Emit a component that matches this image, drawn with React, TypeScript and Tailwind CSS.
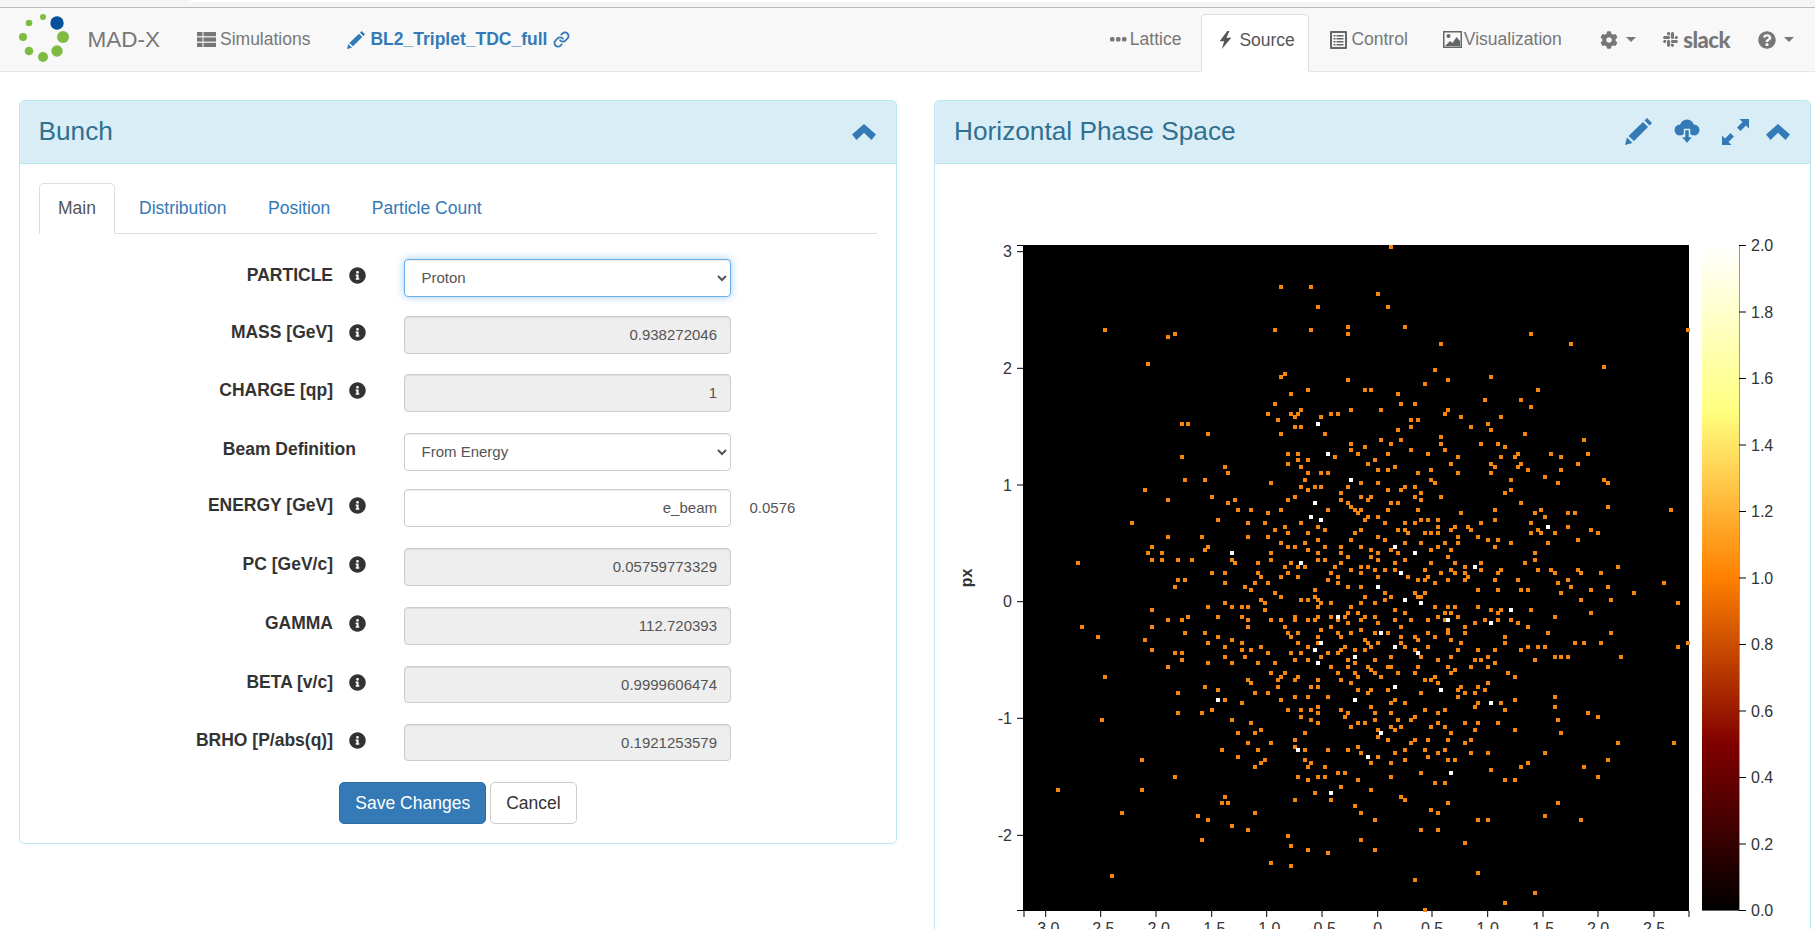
import { FaCog, FaInfoCircle, FaQuestionCircle, FaSlack } from 'react-icons/fa';
import { Link } from 'lucide-react';

type Pt = number[];

// heatmap cells read off the picture, one list per quadrant (crop coords, 3x)
const tl: Pt[] = [[461,296],[653,316],[673,305],[593,396],[994,174],[1084,174],[1104,234],[1284,185],[973,296],[1084,296],[1195,286],[1195,305],[1003,425],[994,436],[1195,446],[1074,476],[1024,485],[1244,476],[1264,476],[973,515],[953,545],[985,566],[1025,545],[1034,556],[1044,546],[1054,536],[1114,556],[1144,550],[1164,546],[1204,536],[693,576],[713,576],[773,606],[994,606],[1034,586],[1054,586],[1124,606],[1204,635],[1244,646],[1204,660],[1225,665],[693,676],[1015,665],[1044,665],[1015,695],[1040,686],[1074,686],[1154,676],[1054,706],[1250,695],[1274,686],[823,706],[833,725],[1074,725],[1114,725],[1134,725],[1284,716],[704,746],[764,746],[1064,746],[963,756],[1234,756],[1284,756],[584,776],[1054,766],[1074,776],[1094,770],[1114,766],[1195,766],[1174,786],[653,811],[783,796],[1015,806],[1034,802],[854,808],[1174,806],[1234,796],[1264,796],[1254,806],[833,817],[863,837],[903,837],[994,837],[1134,837],[1195,817],[1205,827],[1215,837],[1225,847],[1234,837],[953,847],[803,867],[893,877],[943,877],[1054,883],[1104,887],[1124,897],[1284,857],[1254,857],[1244,867],[543,877],[973,897],[1003,887],[1015,907],[1074,907],[1210,907],[1234,897],[653,917],[753,917],[893,917],[953,917],[1104,927],[1204,927],[1284,917],[608,946],[773,946],[764,957],[994,937],[1015,946],[1034,946],[1064,937],[1120,946],[1174,946],[1234,946],[593,967],[633,967],[963,967],[1074,957],[1104,967],[1174,967],[1264,957],[1284,967],[1195,977],[603,987],[633,987],[683,987],[723,987],[843,987],[853,997],[963,987],[1104,987],[1124,987],[1264,977],[1284,990],[381,997],[928,997],[1003,1007],[1024,997],[1044,1007],[1064,1007],[1154,1007],[1174,1002],[1234,1007],[1254,1007],[1274,1017],[788,1027],[823,1027],[923,1027],[933,1037],[995,1037],[1015,1027],[1044,1037],[1145,1027],[1204,1017],[1234,1027],[1164,1037],[1284,1037],[683,1047],[704,1047],[1134,1047]];
const tlWhite: Pt[] = [[1104,576],[1134,665],[1204,746],[1094,817],[1084,857],[1114,867],[843,967],[1054,997]];

const tr: Pt[] = [[35,45],[25,234],[73,286],[456,305],[186,336],[576,336],[925,296],[676,406],[163,415],[205,446],[336,436],[134,455],[475,476],[55,485],[65,515],[104,515],[316,505],[426,505],[456,526],[5,536],[195,545],[205,536],[246,556],[366,556],[95,566],[115,566],[95,586],[270,586],[325,580],[336,596],[55,596],[436,605],[5,626],[35,635],[65,625],[616,625],[186,616],[186,635],[306,635],[355,635],[376,646],[195,656],[95,656],[25,665],[145,665],[415,665],[406,676],[516,665],[625,665],[235,676],[366,676],[546,676],[216,695],[330,695],[426,695],[595,695],[415,707],[346,707],[45,707],[25,716],[154,716],[444,716],[546,716],[115,725],[235,725],[336,725],[495,736],[155,746],[396,746],[676,746],[165,756],[535,756],[685,756],[20,780],[75,766],[65,775],[105,770],[125,786],[396,776],[376,790],[105,796],[186,796],[125,806],[35,817],[55,823],[426,817],[685,827],[876,837],[25,837],[115,837],[346,837],[246,847],[465,847],[486,837],[495,857],[565,847],[585,847],[125,867],[145,867],[175,867],[345,867],[15,880],[73,877],[105,877],[306,877],[456,877],[170,886],[226,886],[265,886],[50,897],[73,897],[275,897],[475,897],[565,886],[635,897],[655,907],[85,907],[135,907],[155,907],[175,907],[216,900],[235,917],[295,917],[456,907],[486,907],[525,907],[15,927],[325,927],[355,927],[595,927],[75,937],[125,937],[235,937],[396,937],[505,937],[195,942],[175,952],[345,946],[35,955],[155,960],[215,957],[465,967],[55,967],[205,977],[465,987],[45,997],[75,992],[155,997],[225,997],[255,1007],[305,997],[436,997],[716,1007],[15,1017],[45,1017],[135,1017],[215,1017],[305,1017],[365,1017],[475,1017],[515,1017],[595,1017],[605,1027],[665,1027],[525,1027],[185,1027],[225,1027],[255,1027],[350,1027],[85,1040],[145,1037],[115,1047],[205,1047],[265,1037],[345,1047],[415,1047],[565,1047]];
const trWhite: Pt[] = [[505,886],[40,946],[103,967],[285,1005],[65,1027]];

const bl: Pt[] = [[673,16],[683,0],[823,7],[883,16],[903,27],[913,7],[953,7],[973,37],[994,52],[1054,57],[1090,27],[1075,62],[1094,47],[1105,57],[1114,67],[1165,12],[1195,22],[1228,16],[1244,47],[1236,70],[1145,67],[1204,77],[773,77],[823,67],[843,77],[873,77],[898,77],[933,57],[943,67],[1274,67],[603,88],[943,88],[1105,77],[1225,97],[1244,107],[713,107],[653,118],[693,118],[803,107],[873,107],[893,118],[963,118],[994,118],[1030,107],[1034,118],[1074,118],[1094,118],[1105,107],[1140,107],[1160,118],[1185,107],[1195,97],[1274,107],[392,137],[603,137],[893,143],[1003,137],[1140,137],[1114,148],[1195,127],[1234,118],[1284,127],[441,167],[704,157],[764,157],[808,167],[1015,157],[1025,167],[1044,157],[1105,167],[1165,157],[1175,167],[1204,157],[1234,148],[1274,157],[584,178],[843,178],[773,187],[873,187],[1044,187],[1074,197],[1105,187],[1244,178],[1254,187],[1284,187],[823,197],[933,198],[1183,197],[1264,197],[603,208],[873,208],[903,208],[1174,208],[1214,208],[1244,205],[673,217],[693,217],[883,225],[953,217],[1024,217],[1054,217],[1114,227],[1134,217],[1165,217],[693,238],[823,227],[1034,243],[1195,238],[1274,238],[773,248],[843,248],[923,248],[973,248],[1074,238],[1214,248],[653,258],[1145,258],[1195,258],[1254,258],[1264,268],[1274,278],[963,278],[1003,278],[1165,278],[1214,278],[461,288],[1044,288],[1225,288],[995,288],[985,298],[893,298],[1034,298],[1105,298],[1175,298],[903,308],[763,318],[985,318],[1084,318],[1105,318],[1204,308],[803,328],[1225,328],[1264,328],[683,338],[913,338],[953,338],[1254,338],[1034,348],[1074,348],[1130,348],[995,358],[823,358],[873,369],[1264,379],[782,388],[1015,388],[1054,388],[1084,388],[1108,379],[1175,384],[1108,399],[683,399],[753,399],[1195,399],[1274,399],[1054,408],[1185,408],[452,418],[843,418],[1084,418],[1225,424],[1274,418],[903,428],[1105,428],[1244,428],[1204,438],[933,448],[1284,448],[863,458],[913,458],[1064,458],[1284,468],[1034,478],[893,488],[963,493],[1034,498],[1225,498],[813,508],[923,508],[1064,508],[1134,508],[1195,508],[1234,518],[863,528],[1284,528],[573,538],[943,538],[1064,538],[933,548],[1084,548],[1264,548],[913,558],[1074,558],[1124,558],[673,588],[1045,588],[1074,598],[1105,588],[1124,588],[1165,578],[1184,578],[1225,598],[573,628],[321,628],[1175,618],[1264,628],[1094,638],[823,648],[1034,658],[813,668],[833,668],[1145,658],[913,699],[512,699],[743,708],[773,718],[1214,678],[1234,699],[1274,718],[843,740],[893,750],[1015,770],[753,780],[1234,780],[1024,800],[1074,810],[1134,819],[1274,810],[963,849],[1024,860],[482,890]];
const blWhite: Pt[] = [[1285,16],[1165,107],[1114,187],[1094,208],[1214,227],[1105,248],[803,358],[1214,358],[1045,508],[1254,528],[1145,638]];

const br: Pt[] = [[135,0],[165,7],[205,0],[255,0],[295,27],[355,27],[426,27],[444,27],[535,7],[575,16],[635,27],[685,16],[857,7],[546,37],[767,37],[15,38],[30,45],[100,42],[110,52],[120,47],[132,37],[15,58],[606,58],[696,58],[897,67],[165,77],[205,77],[226,77],[291,77],[330,88],[365,88],[355,97],[45,88],[75,97],[195,97],[215,97],[235,107],[526,107],[636,97],[175,107],[45,118],[95,118],[145,118],[195,118],[286,127],[316,118],[355,118],[390,118],[456,88],[415,133],[445,137],[65,137],[255,137],[205,148],[25,157],[145,157],[65,167],[105,167],[165,167],[205,157],[255,157],[376,167],[505,157],[696,157],[65,187],[110,182],[215,182],[246,187],[376,187],[585,187],[616,187],[666,187],[925,187],[75,197],[145,197],[445,197],[475,202],[495,197],[897,197],[235,208],[295,208],[346,208],[426,208],[105,208],[28,227],[125,232],[215,227],[325,227],[526,227],[546,227],[565,227],[726,227],[175,238],[280,238],[306,238],[346,248],[465,238],[115,258],[200,258],[20,258],[30,262],[225,268],[276,258],[325,258],[55,278],[105,278],[385,278],[215,278],[5,288],[406,288],[135,298],[155,298],[165,288],[170,308],[325,308],[295,318],[246,318],[235,328],[316,328],[25,328],[118,338],[256,338],[286,338],[235,348],[526,348],[45,357],[406,357],[35,369],[75,369],[295,369],[366,369],[285,379],[195,384],[526,379],[135,388],[376,388],[175,399],[35,399],[625,399],[655,408],[105,408],[95,418],[50,418],[535,418],[175,428],[256,428],[295,428],[355,428],[35,438],[65,438],[155,438],[195,438],[45,448],[285,448],[406,453],[216,458],[546,458],[105,478],[25,478],[95,488],[145,478],[205,478],[276,478],[256,488],[716,488],[887,488],[135,508],[195,508],[75,508],[45,518],[175,518],[276,518],[325,518],[495,518],[145,533],[75,538],[205,538],[226,538],[685,538],[35,548],[444,548],[426,558],[616,558],[336,568],[125,578],[35,588],[655,588],[376,598],[406,598],[165,608],[195,608],[65,650],[73,658],[205,668],[535,668],[155,688],[175,699],[495,708],[295,718],[325,718],[606,718],[125,750],[175,750],[256,790],[295,880],[105,900],[460,939],[376,969],[135,988]];
const brWhite: Pt[] = [[73,58],[124,67],[396,88],[205,118],[336,127],[5,157],[43,197],[115,217],[43,318],[186,328],[336,369],[5,460],[216,578]];

const CELL = 3.33;

function cells(pts: Pt[], ox: number, oy: number) {
  return pts
    .map(([cx, cy]) => {
      const px = ox + cx / 3;
      const py = oy + cy / 3;
      const x = 1023 + Math.floor((px - 1023) / CELL) * CELL;
      const y = 245 + Math.floor((py - 245) / CELL) * CELL;
      return `M${x.toFixed(1)} ${y.toFixed(1)}h4v4h-4z`;
    })
    .join('');
}

const orangePath = cells(tl, 950, 230) + cells(tr, 1380, 230) + cells(bl, 950, 580) + cells(br, 1380, 580);
const whitePath = cells(tlWhite, 950, 230) + cells(trWhite, 1380, 230) + cells(blWhite, 950, 580) + cells(brWhite, 1380, 580);

const yTicks = [
  { y: 251.7, t: '3' },
  { y: 368.3, t: '2' },
  { y: 485, t: '1' },
  { y: 601.7, t: '0' },
  { y: 718.3, t: '-1' },
  { y: 835.3, t: '-2' },
];
const xTicks = [
  { x: 1045.7, t: '-3.0' },
  { x: 1100.7, t: '-2.5' },
  { x: 1156, t: '-2.0' },
  { x: 1211.7, t: '-1.5' },
  { x: 1266.7, t: '-1.0' },
  { x: 1322, t: '-0.5' },
  { x: 1377.7, t: '0' },
  { x: 1432, t: '0.5' },
  { x: 1487.7, t: '1.0' },
  { x: 1543, t: '1.5' },
  { x: 1598, t: '2.0' },
  { x: 1654, t: '2.5' },
];
const barTicks = ['2.0', '1.8', '1.6', '1.4', '1.2', '1.0', '0.8', '0.6', '0.4', '0.2', '0.0'];

function Logo() {
  return (
    <svg width="52" height="54" viewBox="18 10 52 54" className="ml-[18px] mt-[2px] self-start shrink-0">
      <circle cx="57" cy="23" r="6.7" fill="#05509b" />
      <circle cx="63" cy="37" r="6" fill="#80bb41" />
      <circle cx="57" cy="51" r="5.7" fill="#80bb41" />
      <circle cx="43" cy="57" r="5" fill="#80bb41" />
      <circle cx="29" cy="51" r="4.3" fill="#80bb41" />
      <circle cx="23" cy="37" r="4" fill="#80bb41" />
      <circle cx="29" cy="23" r="3.3" fill="#80bb41" />
      <circle cx="43" cy="17" r="3" fill="#80bb41" />
    </svg>
  );
}

function PencilIcon({ size, className }: { size: number; className?: string }) {
  return (
    <svg width={size} height={size} viewBox="0 0 27 27" fill="currentColor" className={className}>
      <path d="M0 27l2-7.500 5.500 5.500z" />
      <path d="M3.500 18L18 4l5 5-14 14z" />
      <path d="M19.500 2.500L22 0l5 5-2.500 2.500z" />
    </svg>
  );
}

function ThListIcon() {
  return (
    <svg width="19" height="15" viewBox="0 0 19 15" fill="#777" className="shrink-0">
      <rect x="0" y="0" width="5.500" height="4.200" />
      <rect x="6.500" y="0" width="12.500" height="4.200" />
      <rect x="0" y="5.400" width="5.500" height="4.200" />
      <rect x="6.500" y="5.400" width="12.500" height="4.200" />
      <rect x="0" y="10.800" width="5.500" height="4.200" />
      <rect x="6.500" y="10.800" width="12.500" height="4.200" />
    </svg>
  );
}

function DotsIcon() {
  return (
    <svg width="17" height="5" viewBox="0 0 17 5" fill="#777" className="shrink-0">
      <rect x="0" y="0" width="4.500" height="4.500" rx="1.500" />
      <rect x="6" y="0" width="4.500" height="4.500" rx="1.500" />
      <rect x="12" y="0" width="4.500" height="4.500" rx="1.500" />
    </svg>
  );
}

function FlashIcon() {
  return (
    <svg width="13" height="18" viewBox="0 0 13 20" fill="#555" className="shrink-0">
      <path d="M8.500 0L0 11.500h5L2.500 20 13 7.500H7.500L11 0z" />
    </svg>
  );
}

function ListAltIcon() {
  return (
    <svg width="17" height="18" viewBox="0 0 17 18" className="shrink-0">
      <rect x="0" y="0" width="17" height="18" rx="1" fill="#666" />
      <rect x="2" y="2" width="13" height="14" fill="#f8f8f8" />
      <path d="M3.500 4h2v1.500h-2zM6.500 4h7v1.500h-7zM3.500 7h2v1.500h-2zM6.500 7h7v1.500h-7zM3.500 10h2v1.500h-2zM6.500 10h7v1.500h-7zM3.500 13h2v1.500h-2zM6.500 13h7v1.500h-7z" fill="#666" />
    </svg>
  );
}

function PictureIcon() {
  return (
    <svg width="19" height="17" viewBox="0 0 19 17" className="shrink-0">
      <rect x="0" y="0" width="19" height="17" fill="#666" />
      <rect x="1.500" y="1.500" width="16" height="14" fill="#f8f8f8" />
      <circle cx="5.500" cy="5" r="2" fill="#666" />
      <path d="M2 15l5-5 2.500 2 4-6 3.500 4v5z" fill="#666" />
    </svg>
  );
}

function ChevronUpIcon() {
  return (
    <svg width="24" height="16" viewBox="0 0 24 16" fill="#337ab7" className="shrink-0">
      <path d="M12 0l12 10.500-4.500 5.500L12 8.800 4.500 16 0 10.500z" />
    </svg>
  );
}

function CloudDownloadIcon() {
  return (
    <svg width="26" height="26" viewBox="0 0 26 26" fill="#337ab7" className="shrink-0">
      <circle cx="13" cy="7.500" r="7" />
      <circle cx="6" cy="11" r="5.500" />
      <circle cx="20" cy="11" r="5.500" />
      <path d="M10.500 10.500h5v7h4l-6.500 7.500-6.500-7.500h4z" stroke="#d9edf7" strokeWidth="1.500" />
    </svg>
  );
}

function FullscreenIcon() {
  return (
    <svg width="27" height="26" viewBox="0 0 27 26" fill="#337ab7" className="shrink-0">
      <path d="M27 0v9.500l-3-3-5.500 5.500-3.500-3.500 5.500-5.500-3-3z" />
      <path d="M0 26v-9.500l3 3 5.500-5.500 3.500 3.500-5.500 5.500 3 3z" />
    </svg>
  );
}

function Caret({ color }: { color: string }) {
  return (
    <span
      className="block w-0 h-0 shrink-0 border-x-[5px] border-t-[5px] border-x-transparent"
      style={{ borderTopColor: color }}
    />
  );
}

function Tab({ label, active }: { label: string; active?: boolean }) {
  if (active) {
    return (
      <div className="h-[51px] w-[76px] -mb-px flex items-center justify-center bg-white border border-[#ddd] border-b-white rounded-t-[5px] text-[#555] pb-px">
        {label}
      </div>
    );
  }
  return <div className="h-[50px] flex items-center text-[#337ab7]">{label}</div>;
}

function InfoLabel({ label }: { label: string }) {
  return (
    <div className="flex w-[327px] shrink-0 items-center pt-[4px] h-[29px]">
      <div className="w-[294px] text-right font-bold text-[#333] text-[17.500px] leading-[25px] whitespace-nowrap">{label}</div>
      <FaInfoCircle className="ml-[16px] text-[#333] shrink-0" size={17} />
    </div>
  );
}

function ReadOnlyRow({ label, value, className }: { label: string; value: string; className: string }) {
  return (
    <div className={`flex items-start ${className}`}>
      <InfoLabel label={label} />
      <input
        readOnly
        value={value}
        className="ml-[37.500px] w-[327px] h-[37.500px] px-[12.500px] text-right text-[15px] text-[#555] bg-[#eee] border border-[#ccc] rounded-[4px] shadow-[inset_0_1px_1px_rgba(0,0,0,0.075)] outline-none"
      />
    </div>
  );
}

function PhasePlot() {
  return (
    <svg width="875" height="800" viewBox="935 164 875 800" className="block">
      <defs>
        <linearGradient id="afmhot" x1="0" y1="0" x2="0" y2="1">
          <stop offset="0" stopColor="#ffffff" />
          <stop offset="0.25" stopColor="#ffff80" />
          <stop offset="0.5" stopColor="#ff8000" />
          <stop offset="0.75" stopColor="#800000" />
          <stop offset="1" stopColor="#000000" />
        </linearGradient>
      </defs>
      <rect x="1023" y="245" width="666" height="666" fill="#000" />
      <path d={orangePath} fill="#f7860f" shapeRendering="crispEdges" />
      <path d={whitePath} fill="#fff" shapeRendering="crispEdges" />

      <path d="M1017 245.500h6M1017 910.500h6" stroke="#000" />
      {yTicks.map((t) => (
        <g key={t.t}>
          <line x1="1017" x2="1023" y1={t.y} y2={t.y} stroke="#000" />
          <text x="1012" y={t.y + 5.500} textAnchor="end" fontSize="16" fill="#333">
            {t.t}
          </text>
        </g>
      ))}
      <text
        transform="translate(972 578) rotate(-90)"
        textAnchor="middle"
        fontSize="16"
        fontWeight="bold"
        fill="#333"
      >
        px
      </text>

      <path d="M1024 911v6M1689 911v6" stroke="#000" />
      {xTicks.map((t) => (
        <g key={t.x}>
          <line x1={t.x} x2={t.x} y1="911" y2="917" stroke="#000" />
          <text x={t.x} y="934" textAnchor="middle" fontSize="16" fill="#333">
            {t.t}
          </text>
        </g>
      ))}

      <rect x="1702" y="245" width="37" height="666" fill="url(#afmhot)" />
      <line x1="1739.500" x2="1739.500" y1="245" y2="911" stroke="#999" />
      <line x1="1702" x2="1739" y1="910.500" y2="910.500" stroke="#666" />
      {barTicks.map((t, i) => {
        const y = 245.500 + i * 66.5;
        return (
          <g key={t}>
            <line x1="1739" x2="1746" y1={y} y2={y} stroke="#000" />
            <text x="1751" y={y + 5.500} fontSize="16" fill="#333">
              {t}
            </text>
          </g>
        );
      })}
    </svg>
  );
}

export default function App() {
  return (
    <div className="h-[929px] w-full overflow-hidden bg-white text-[17.500px] text-[#333] [font-family:'Liberation_Sans',Arial,sans-serif]">
      {/* bit of browser chrome left in the capture */}
      <div className="h-[8px] bg-[#f5f5f5] border-b border-[#bbb] px-[190px]">
        <div className="h-[2px] w-[1250px] bg-white rounded-b-[3px]" />
      </div>

      <nav className="h-[64px] flex bg-[#f8f8f8] border-b border-[#e7e7e7] text-[#777]">
        <Logo />
        <div className="ml-[17.500px] flex items-center text-[22.500px]">MAD-X</div>
        <div className="ml-[37px] flex items-center gap-[4px]">
          <ThListIcon />
          <span>Simulations</span>
        </div>
        <div className="ml-[37px] flex items-center text-[#337ab7] font-bold">
          <PencilIcon size={18} className="shrink-0" />
          <span className="ml-[5px]">BL2_Triplet_TDC_full</span>
          <Link size={17} strokeWidth={2.5} className="ml-[6px] shrink-0" />
        </div>

        <div className="ml-auto mr-[21px] flex items-center">
          <DotsIcon />
          <span className="ml-[3px]">Lattice</span>
          <div className="ml-[20px] self-end h-[58px] w-[108px] -mb-[1px] flex items-center gap-[7px] pl-[17px] pb-[6px] bg-white border border-[#ddd] border-b-white rounded-t-[5px] text-[#555]">
            <FlashIcon />
            <span>Source</span>
          </div>
          <div className="ml-[21px]">
            <ListAltIcon />
          </div>
          <span className="ml-[4px]">Control</span>
          <div className="ml-[35px]">
            <PictureIcon />
          </div>
          <span className="ml-[2px]">Visualization</span>
          <FaCog className="ml-[38.500px] shrink-0" size={18} />
          <div className="ml-[8px]">
            <Caret color="#777" />
          </div>
          <FaSlack className="ml-[26px] shrink-0" size={17} />
          <span className="ml-[4px] font-black text-[22px] leading-none tracking-[-0.5px] [font-family:Lato,sans-serif]">slack</span>
          <FaQuestionCircle className="ml-[28px] shrink-0" size={18} />
          <div className="ml-[8px]">
            <Caret color="#777" />
          </div>
        </div>
      </nav>

      <main className="pt-[28px] pl-[19px] pr-[4px] grid grid-cols-[878px_877px] gap-x-[37px] items-start">
        <section className="border border-[#bce8f1] rounded-[5px] bg-white">
          <div className="h-[63px] flex items-center justify-between bg-[#d9edf7] border-b border-[#bce8f1] rounded-t-[4px] pl-[18.500px] pr-[20px] pb-[1px]">
            <h2 className="text-[26.250px] text-[#31708f]">Bunch</h2>
            <ChevronUpIcon />
          </div>
          <div className="px-[19px] pt-[19px] pb-[19px]">
            <div className="flex items-end gap-[41.500px] border-b border-[#ddd]">
              <div className="-mr-[17.500px]">
                <Tab label="Main" active />
              </div>
              <Tab label="Distribution" />
              <Tab label="Position" />
              <Tab label="Particle Count" />
            </div>

            <div className="mt-[25px] flex flex-col">
              <div className="flex items-start">
                <InfoLabel label="PARTICLE" />
                <select
                  defaultValue="Proton"
                  className="ml-[37.500px] w-[327px] h-[37.500px] pl-[13px] pr-[2px] text-[15px] text-[#555] bg-white border border-[#66afe9] rounded-[4px] shadow-[inset_0_1px_1px_rgba(0,0,0,0.075),0_0_8px_rgba(102,175,233,0.6)] outline-none"
                >
                  <option>Proton</option>
                </select>
              </div>
              <ReadOnlyRow className="mt-[19.500px]" label="MASS [GeV]" value="0.938272046" />
              <ReadOnlyRow className="mt-[20.500px]" label="CHARGE [qp]" value="1" />
              <div className="mt-[21.500px] flex items-start">
                <div className="w-[327px] shrink-0 pr-[10px] pt-[4px] text-right font-bold leading-[25px]">Beam Definition</div>
                <select
                  defaultValue="From Energy"
                  className="ml-[37.500px] w-[327px] h-[37.500px] pl-[13px] pr-[2px] text-[15px] text-[#555] bg-white border border-[#ccc] rounded-[4px] shadow-[inset_0_1px_1px_rgba(0,0,0,0.075)] outline-none"
                >
                  <option>From Energy</option>
                </select>
              </div>
              <div className="mt-[18.500px] flex items-start">
                <InfoLabel label="ENERGY [GeV]" />
                <input
                  readOnly
                  value="e_beam"
                  className="ml-[37.500px] w-[327px] h-[37.500px] px-[12.500px] text-right text-[15px] text-[#555] bg-white border border-[#ccc] rounded-[4px] shadow-[inset_0_1px_1px_rgba(0,0,0,0.075)] outline-none"
                />
                <span className="ml-[19px] text-[15px] leading-[37.500px] text-[#555]">0.0576</span>
              </div>
              <ReadOnlyRow className="mt-[21.500px]" label="PC [GeV/c]" value="0.05759773329" />
              <ReadOnlyRow className="mt-[21.500px]" label="GAMMA" value="112.720393" />
              <ReadOnlyRow className="mt-[21.200px]" label="BETA [v/c]" value="0.9999606474" />
              <ReadOnlyRow className="mt-[20.800px]" label="BRHO [P/abs(q)]" value="0.1921253579" />
            </div>

            <div className="mt-[21px] flex justify-center gap-[4px]">
              <button className="h-[42px] px-[15px] bg-[#337ab7] border border-[#2e6da4] rounded-[5px] text-white">
                Save Changes
              </button>
              <button className="h-[42px] px-[15px] bg-white border border-[#ccc] rounded-[5px] text-[#333]">
                Cancel
              </button>
            </div>
          </div>
        </section>

        <section className="border border-[#bce8f1] rounded-[5px] bg-white">
          <div className="h-[63px] flex items-center bg-[#d9edf7] border-b border-[#bce8f1] rounded-t-[4px] pl-[19px] pr-[20px] pb-[1px]">
            <h2 className="text-[26.250px] text-[#31708f]">Horizontal Phase Space</h2>
            <div className="ml-auto flex items-center">
              <PencilIcon size={27} className="text-[#337ab7] shrink-0" />
              <div className="ml-[22px]">
                <CloudDownloadIcon />
              </div>
              <div className="ml-[22px]">
                <FullscreenIcon />
              </div>
              <div className="ml-[17px]">
                <ChevronUpIcon />
              </div>
            </div>
          </div>
          <PhasePlot />
        </section>
      </main>
    </div>
  );
}
